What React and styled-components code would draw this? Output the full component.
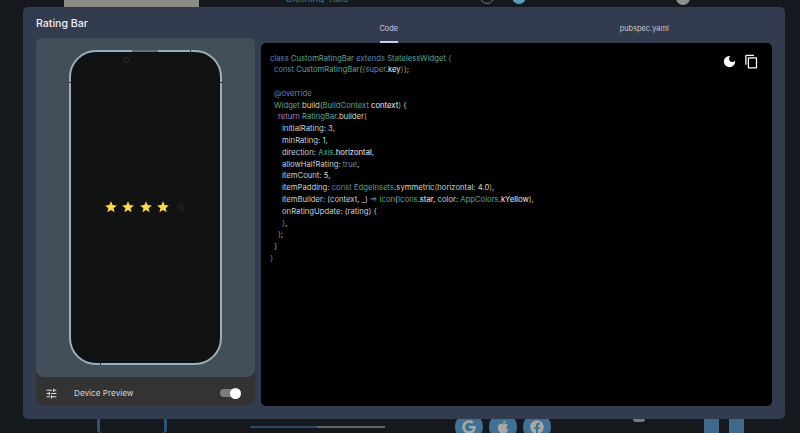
import React from "react";
import styled, { createGlobalStyle } from "styled-components";
import { MdStar, MdDarkMode, MdContentCopy, MdTune } from "react-icons/md";
import { FaGoogle, FaApple, FaFacebook } from "react-icons/fa";

const GlobalStyle = createGlobalStyle`
  html, body {
    margin: 0;
    height: 100%;
    overflow: hidden;
    background: #15191e;
    font-family: "Inter", "Liberation Sans", sans-serif;
  }
  #root { height: 100%; }
`;

const Page = styled.div`
  position: relative;
  width: 800px;
  height: 433px;
  display: flex;
  flex-direction: column;
  justify-content: space-between;
  overflow: hidden;
`;

const TopStrip = styled.div`
  height: 7px;
  display: flex;
  align-items: flex-end;
  padding-left: 64px;
`;

const GrayTab = styled.div`
  width: 135px;
  height: 7px;
  background: #8b8b87;
`;

const TopLabel = styled.div`
  width: 195px;
  margin: 0 0 4px 86px;
  color: #37798c;
  font-size: 10px;
  line-height: 10px;
  height: 3px;
  overflow: hidden;
  display: flex;
  align-items: flex-end;
`;

const TopDot = styled.div`
  width: 14px;
  height: 14px;
  flex: none;
  margin-left: ${(props) => props.$gap}px;
  margin-bottom: ${(props) => props.$lift}px;
  border-radius: 50%;
  box-sizing: border-box;
  border: ${(props) => (props.$ring ? "1px solid #777" : "none")};
  background: ${(props) => props.$color || "transparent"};
`;

const BottomStrip = styled.div`
  height: 14px;
  display: flex;
  padding-left: 97px;
`;

const BlueBracket = styled.div`
  width: 70px;
  height: 14px;
  box-sizing: border-box;
  border: solid #2a527a;
  border-width: 0 3px;
  border-radius: 0 0 4px 4px;
`;

const Slider = styled.div`
  width: 135px;
  height: 2px;
  margin: 7px 0 0 83px;
  background: linear-gradient(90deg, #264a6b 50%, #666 50%);
`;

const Socials = styled.div`
  display: flex;
  gap: 6px;
  margin: -6px 0 0 70px;
`;

const Social = styled.div`
  width: 28px;
  height: 28px;
  border-radius: 50%;
  background: #3f7197;
  color: #a9a9a4;
  font-size: 14px;
  display: flex;
  align-items: center;
  justify-content: center;
`;

const Notch = styled.div`
  width: 12px;
  height: 3px;
  margin-left: 82px;
  border-radius: 0 0 6px 6px;
  background: #6f7c8a;
`;

const Block = styled.div`
  width: 15px;
  height: 14px;
  background: #3d6a8a;
  margin-left: ${(props) => props.$gap}px;
`;

/* the dialog lies over the dimmed page */
const Dialog = styled.div`
  position: absolute;
  left: 23px;
  top: 7px;
  width: 762px;
  height: 412px;
  box-sizing: border-box;
  padding: 10px 13px 13px;
  background: #323c4e;
  border-radius: 5px;
  display: grid;
  grid-template-columns: 219px 511px;
  column-gap: 6px;
  grid-template-rows: 21px 1fr;
`;

const Title = styled.h2`
  margin: 0;
  color: #eef0f3;
  font-size: 10.6px;
  line-height: 14px;
  font-weight: 500;
`;

const Tabs = styled.div`
  display: flex;
  height: 26px;
`;

const Tab = styled.div`
  flex: 1;
  display: flex;
  flex-direction: column;
  align-items: center;
  justify-content: space-between;
  color: ${(props) => (props.$active ? "#c9c6e6" : "#c3c8d0")};
  font-size: 7.4px;
  line-height: 10px;
  padding-top: 7px;
  box-sizing: border-box;
`;

const TabMark = styled.div`
  width: 18px;
  height: 2px;
  background: #cfc8ee;
`;

const PreviewColumn = styled.div`
  grid-row: 2;
  height: 367px;
  background: #333333;
  border-radius: 8px;
  display: flex;
  flex-direction: column;
`;

const DeviceArea = styled.div`
  height: 339px;
  background: #434f58;
  border-radius: 6px 6px 8px 8px;
  display: flex;
  justify-content: center;
  padding-top: 12px;
  box-sizing: border-box;
`;

const Phone = styled.div`
  position: relative;
  width: 153px;
  height: 315px;
  box-sizing: border-box;
  border: 2px solid #96b0bf;
  border-radius: 27px;
  background: #111312;
  display: flex;
  align-items: center;
  justify-content: center;
`;

const Camera = styled.div`
  position: absolute;
  top: 5px;
  left: 52px;
  width: 6px;
  height: 6px;
  box-sizing: border-box;
  border-radius: 50%;
  border: 1px solid #2b2e31;
`;

const Speaker = styled.div`
  position: absolute;
  top: -2px;
  left: 61px;
  width: 26px;
  height: 2px;
  background: #5f6f7a;
`;

/* small antenna cuts in the phone's frame */
const FrameTick = styled.div`
  position: absolute;
  background: #2c3338;
  top: ${(props) => props.$top};
  left: ${(props) => props.$left};
  right: ${(props) => props.$right};
  bottom: ${(props) => props.$bottom};
  width: ${(props) => (props.$flat ? "3px" : "1px")};
  height: ${(props) => (props.$flat ? "1px" : "3px")};
`;

const Stars = styled.div`
  display: flex;
  gap: 3.5px;
  margin-top: -1px;
`;

const Star = styled(MdStar)`
  width: 14px;
  height: 14px;
  color: ${(props) => (props.$on ? "#fdd74a" : "#1b1d1e")};
`;

const PreviewBar = styled.div`
  flex: 1;
  display: flex;
  align-items: center;
  padding: 4px 15px 0 9px;
  color: #d8d8d8;
  font-size: 8.2px;
`;

const TuneIcon = styled(MdTune)`
  width: 13px;
  height: 13px;
  color: #e4e4e4;
  margin-right: 16px;
`;

const BarLabel = styled.span`
  flex: 1;
`;

const Toggle = styled.div`
  width: 20px;
  height: 8px;
  border-radius: 4px;
  background: #7d7d7d;
  position: relative;
`;

const ToggleThumb = styled.div`
  position: absolute;
  right: -1px;
  top: -1.5px;
  width: 11px;
  height: 11px;
  border-radius: 50%;
  background: #fff;
`;

const CodeColumn = styled.div`
  grid-column: 2;
  grid-row: 1 / span 2;
  display: flex;
  flex-direction: column;
  min-height: 0;
`;

const CodePane = styled.div`
  position: relative;
  height: 363px;
  box-sizing: border-box;
  background: #000;
  border-radius: 5px;
  padding: 9px 9px;
`;

const CodeActions = styled.div`
  position: absolute;
  top: 11px;
  right: 13px;
  display: flex;
  gap: 7px;
  color: #fff;
  font-size: 15px;
`;

const Code = styled.div`
  font-size: 7.7px;
  line-height: 11.8px;
  color: #cfd8e0;
  white-space: pre;
  padding-top: 0.5px;
`;

const Line = styled.div`
  height: 11.8px;
  padding-left: ${(props) => props.$indent * 4}px;
`;

const tokenColors = {
  k: "#5f86b8",
  t: "#5aa594",
  f: "#d8d8b0",
  p: "#c3d3de",
  r: "#b57fb5",
  b: "#c9a24e",
  w: "#f0f0f0",
};

const Tok = styled.span`
  color: ${(props) => tokenColors[props.$k]};
`;

const code = [
  [0, ["k", "class "], ["t", "CustomRatingBar "], ["k", "extends "], ["t", "StatelessWidget "], ["k", "{"]],
  [1, ["k", "const "], ["t", "CustomRatingBar"], ["b", "("], ["k", "{super"], ["p", "."], ["w", "key"], ["k", "}"], ["b", ")"], ["p", ";"]],
  [0],
  [1, ["k", "@override"]],
  [1, ["t", "Widget "], ["f", "build"], ["b", "("], ["t", "BuildContext "], ["w", "context"], ["b", ")"], ["p", " {"]],
  [2, ["r", "return "], ["t", "RatingBar"], ["p", "."], ["f", "builder"], ["b", "("]],
  [3, ["p", "initialRating: "], ["f", "3"], ["p", ","]],
  [3, ["p", "minRating: "], ["f", "1"], ["p", ","]],
  [3, ["p", "direction: "], ["t", "Axis"], ["p", "."], ["w", "horizontal"], ["p", ","]],
  [3, ["p", "allowHalfRating: "], ["k", "true"], ["p", ","]],
  [3, ["p", "itemCount: "], ["f", "5"], ["p", ","]],
  [3, ["p", "itemPadding: "], ["k", "const "], ["t", "EdgeInsets"], ["p", "."], ["f", "symmetric"], ["b", "("], ["p", "horizontal: "], ["f", "4.0"], ["b", ")"], ["p", ","]],
  [3, ["p", "itemBuilder: (context, _) "], ["k", "=> "], ["t", "Icon"], ["p", "("], ["t", "Icons"], ["p", "."], ["w", "star"], ["p", ", color: "], ["t", "AppColors"], ["p", "."], ["w", "kYellow"], ["p", "),"]],
  [3, ["p", "onRatingUpdate: (rating) {"]],
  [3, ["k", "}"], ["p", ","]],
  [2, ["r", ")"], ["p", ";"]],
  [1, ["b", "}"]],
  [0, ["k", "}"]],
];

export default function App() {
  return (
    <>
      <GlobalStyle />
      <Page>
        <TopStrip>
          <GrayTab />
          <TopLabel>Clothing Tails</TopLabel>
          <TopDot $ring $gap={0} $lift={3} />
          <TopDot $color="#5c9cc4" $gap={18} $lift={3} />
          <TopDot $color="#8f8f8f" $gap={150} $lift={2} />
        </TopStrip>
        <BottomStrip>
          <BlueBracket />
          <Slider />
          <Socials>
            <Social><FaGoogle /></Social>
            <Social><FaApple /></Social>
            <Social><FaFacebook /></Social>
          </Socials>
          <Notch />
          <Block $gap={59} />
          <Block $gap={10} />
        </BottomStrip>
        <Dialog>
          <Title>Rating Bar</Title>
          <PreviewColumn>
            <DeviceArea>
              <Phone>
                <Speaker />
                <Camera />
                <FrameTick $top="-2px" $left="119px" />
                <FrameTick $top="30px" $left="-3px" $flat />
                <FrameTick $top="30px" $right="-3px" $flat />
                <FrameTick $bottom="-2px" $left="29px" />
                <Stars>
                  {[1, 2, 3, 4, 5].map((n) => (
                    <Star key={n} $on={n < 5} />
                  ))}
                </Stars>
              </Phone>
            </DeviceArea>
            <PreviewBar>
              <TuneIcon />
              <BarLabel>Device Preview</BarLabel>
              <Toggle>
                <ToggleThumb />
              </Toggle>
            </PreviewBar>
          </PreviewColumn>
          <CodeColumn>
            <Tabs>
              <Tab $active>
                Code
                <TabMark />
              </Tab>
              <Tab>pubspec.yaml</Tab>
            </Tabs>
            <CodePane>
              <CodeActions>
                <MdDarkMode />
                <MdContentCopy />
              </CodeActions>
              <Code>
                {code.map(([indent, ...tokens], i) => (
                  <Line key={i} $indent={indent}>
                    {tokens.map(([k, text], j) => (
                      <Tok key={j} $k={k}>{text}</Tok>
                    ))}
                  </Line>
                ))}
              </Code>
            </CodePane>
          </CodeColumn>
        </Dialog>
      </Page>
    </>
  );
}
